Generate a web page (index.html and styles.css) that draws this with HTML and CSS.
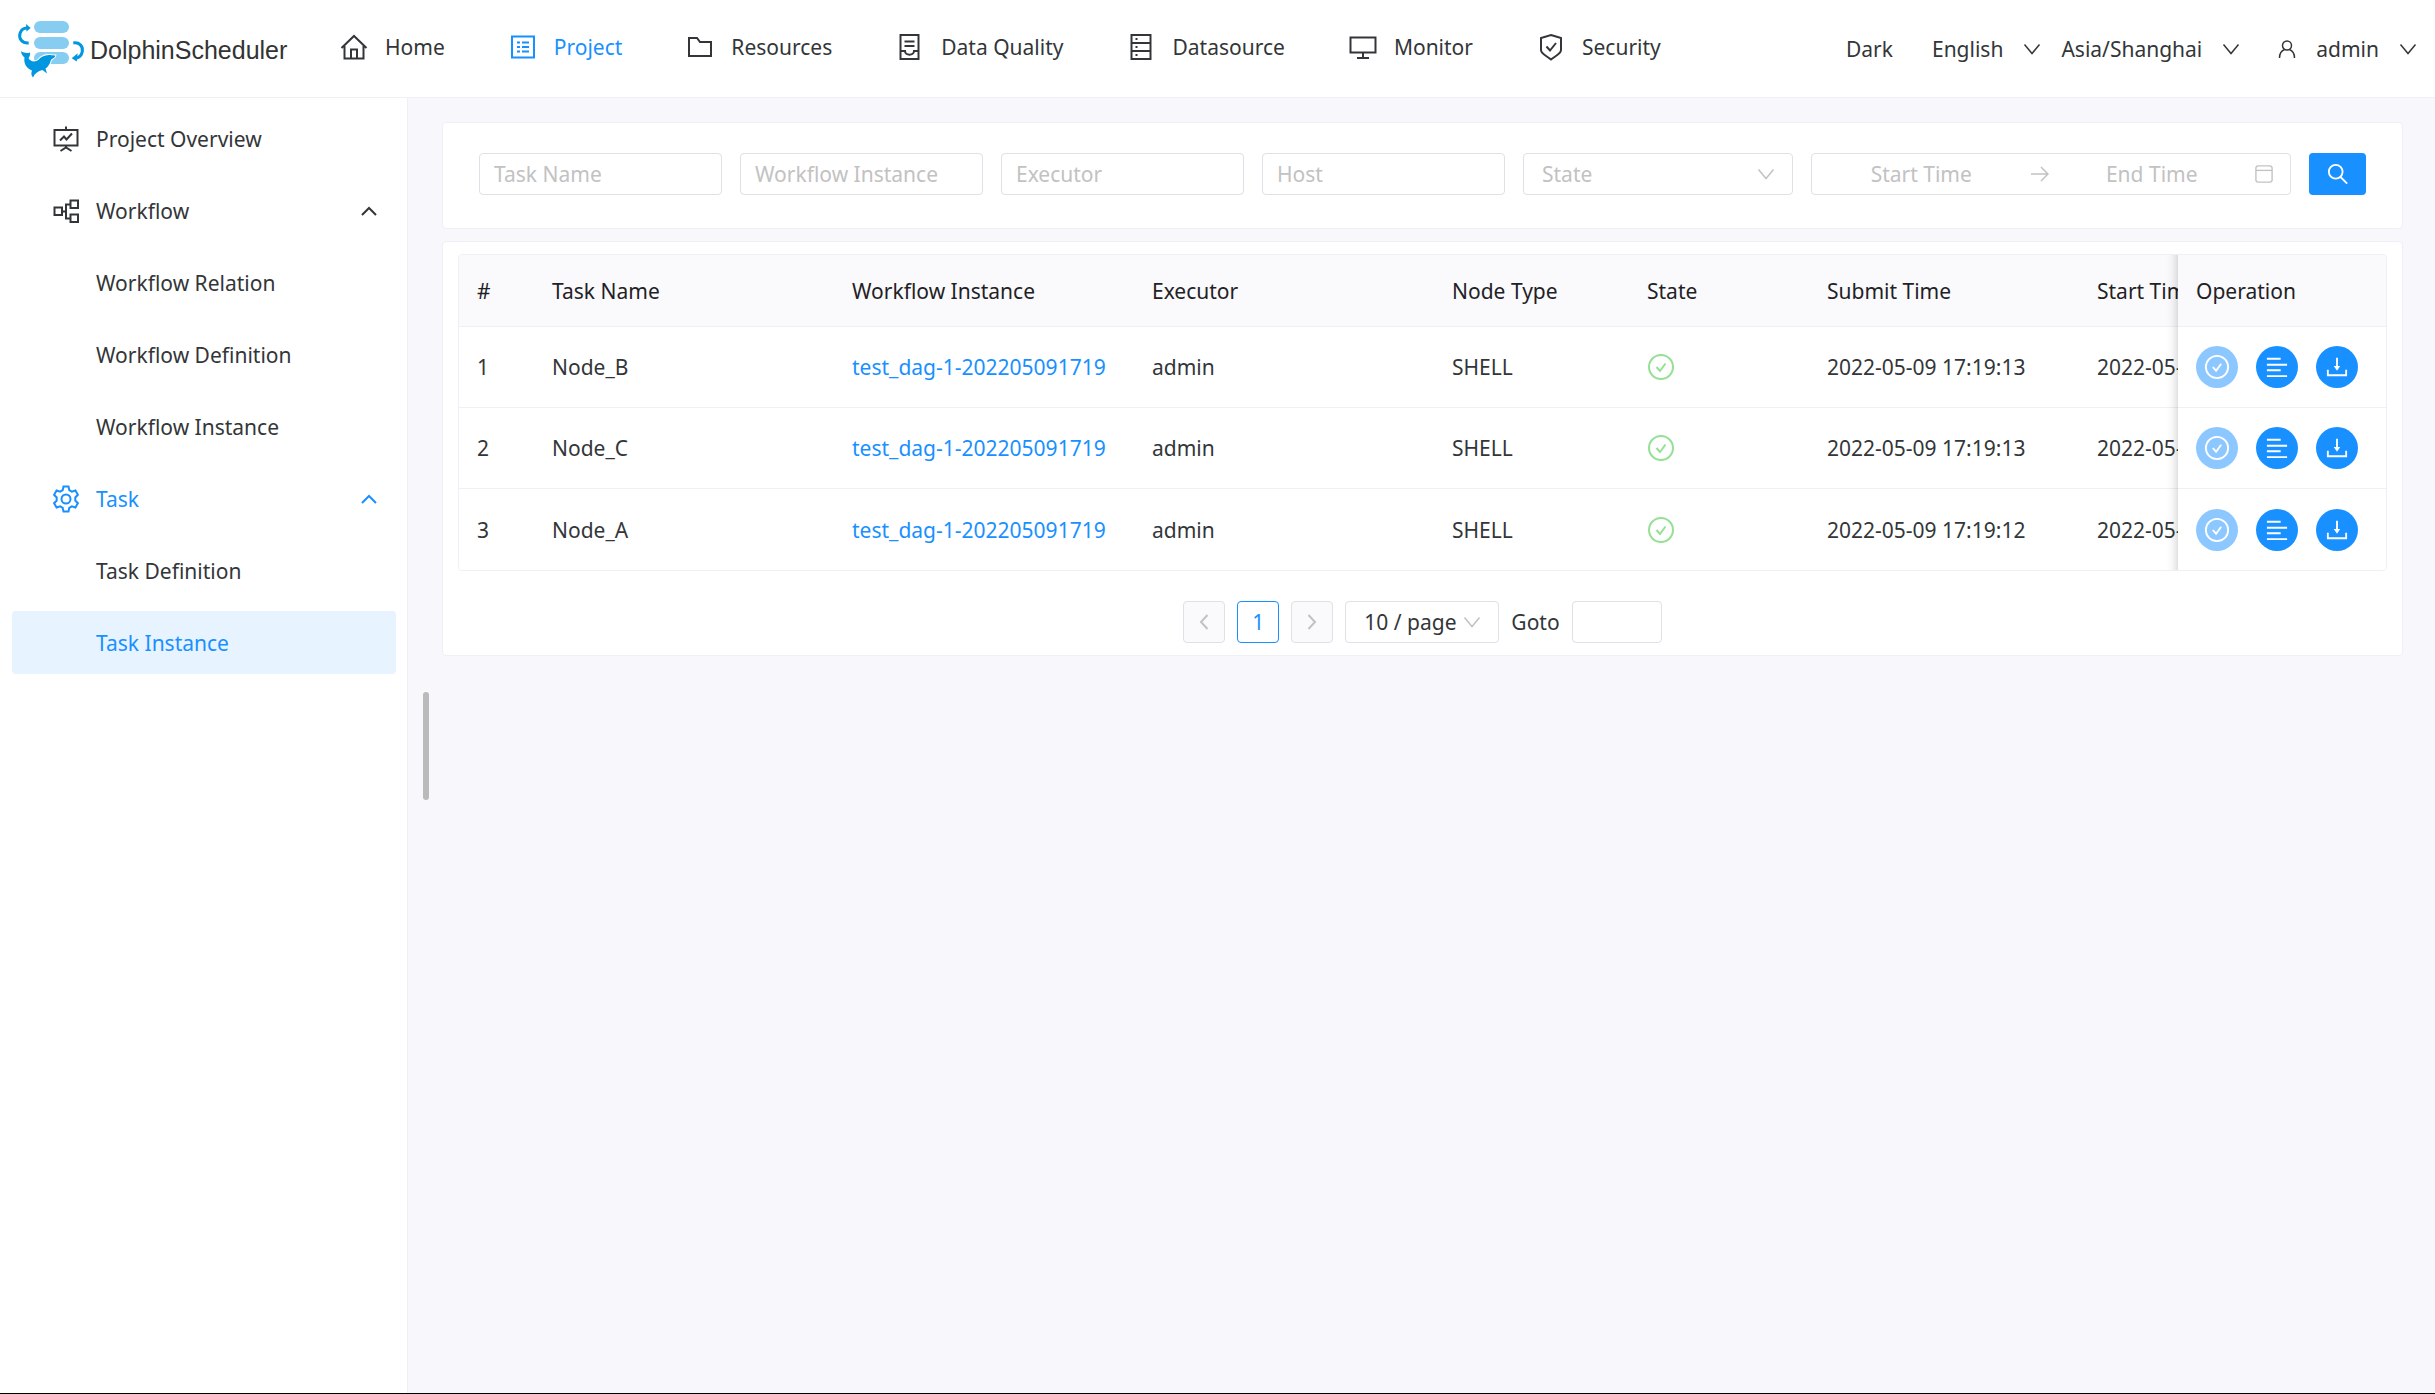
FILE: index.html
```html
<!DOCTYPE html>
<html lang="en">
<head>
<meta charset="utf-8">
<title>DolphinScheduler</title>
<link rel="stylesheet" href="styles.css">
</head>
<body>
<svg class="sprite" aria-hidden="true">
  <symbol id="i-home" viewBox="0 0 28 28"><path d="M1.500 15 14 3l12.500 12M4.500 13v12.500h19V13M11 25v-8.500h6V25"/></symbol>
  <symbol id="i-project" viewBox="0 0 28 28"><path d="M3 3.500h22v21H3zM8 9.500h3M8 14h3M8 18.500h3M13 9.500h7M13 14h7M13 18.500h7" /></symbol>
  <symbol id="i-folder" viewBox="0 0 28 28"><path d="M3 5h8l3 4h11v14H3z"/></symbol>
  <symbol id="i-quality" viewBox="0 0 28 28"><path d="M4.500 2h18v24h-18zM8.500 8.500h10M8.500 13h10M4.500 18h4.500c0 5 9 5 9 0h4.500"/></symbol>
  <symbol id="i-data" viewBox="0 0 28 28"><path d="M4.500 2h19v24h-19zM4.500 10h19M4.500 18h19M8.500 6h2M8.500 14h2M8.500 22h2"/></symbol>
  <symbol id="i-monitor" viewBox="0 0 28 28"><path d="M1.500 4.500h25v15h-25zM14 20v5M8 25h12"/></symbol>
  <symbol id="i-shield" viewBox="0 0 28 28"><path d="M14 2l10 3v12c0 4-6 6-10 9.500C10 23 4 21 4 17V5zM9.500 13.500l3.500 4 6-7.500"/></symbol>
  <symbol id="i-board" viewBox="0 0 28 28"><path d="M2.500 5h23v15.500h-23zM14 1.500V5M14 20.500V23M8.500 26l5.500-3.500 5.500 3.500M8 15.500l4-4 2.500 3 5.500-6"/></symbol>
  <symbol id="i-flow" viewBox="0 0 28 28"><path d="M2.500 10.500h7.500v7.500H2.500zM18.500 3.500H26V11h-7.500zM18.500 17.500H26V25h-7.500zM10 14.500h4M18.500 7.500H14v14h4.500"/></symbol>
  <symbol id="i-gear" viewBox="0 0 28 28"><path d="M11.500 1.500h5l.800 3.700 2.500 1.400 3.600-1.100 2.500 4.300-2.600 2.700v3l2.600 2.700-2.500 4.300-3.600-1.100-2.500 1.400-.800 3.700h-5l-.800-3.700-2.500-1.400-3.600 1.100-2.500-4.300 2.600-2.700v-3L2.100 9.800l2.500-4.300 3.600 1.100 2.500-1.400z"/><circle cx="14" cy="14" r="4.500"/></symbol>
  <symbol id="i-up" viewBox="0 0 18 18"><path d="M2 13l7-7 7 7"/></symbol>
  <symbol id="i-down" viewBox="0 0 18 18"><path d="M1.500 4.500 9 13.500l7.500-9"/></symbol>
  <symbol id="i-left" viewBox="0 0 18 18"><path d="M12.500 2 6 9l6.500 7"/></symbol>
  <symbol id="i-right" viewBox="0 0 18 18"><path d="M5.500 2 12 9l-6.500 7"/></symbol>
  <symbol id="i-user" viewBox="0 0 18 18"><circle cx="9" cy="5.500" r="4.500"/><path d="M1.500 18c0-5 2.500-7.500 5-8.500M16.500 18c0-5-2.500-7.500-5-8.500"/></symbol>
  <symbol id="i-arrow" viewBox="0 0 18 18"><path d="M0 9h17M10 2l7 7-7 7"/></symbol>
  <symbol id="i-calendar" viewBox="0 0 20 20"><rect x="1" y="1" width="18" height="18" rx="2.500"/><path d="M1 6h18"/></symbol>
  <symbol id="i-search" viewBox="0 0 24 24"><circle cx="9.500" cy="9.500" r="7.500"/><path d="M14.500 15l7.500 7.500"/></symbol>
  <symbol id="i-check" viewBox="0 0 28 28"><circle cx="14" cy="14" r="12"/><path d="M9.500 14l3.500 4 5.500-7.500"/></symbol>
  <symbol id="i-log" viewBox="0 0 24 24"><path d="M1 3h15M1 9.500h22M1 15.500h15M1 22h22"/></symbol>
  <symbol id="i-download" viewBox="0 0 24 24"><path d="M2 15v6h20v-6M12 2v11"/><path class="solid" d="M8.500 11h7L12 16z"/></symbol>
</svg>

<header class="header">
  <a class="logo" href="#" aria-label="DolphinScheduler">
    <svg class="logo-mark" viewBox="0 0 70 61" aria-hidden="true">
      <g class="pill"><rect x="18" y="3" width="35" height="12" rx="6"/><rect x="18" y="19" width="35" height="12" rx="6"/><rect x="18" y="34" width="35" height="12" rx="6"/></g>
      <path class="loop" d="M12.700 25C6 25.500 2.500 20.500 4 15.500 5 12 7.500 10 11 10M57.300 25c6-1 10 3 9 8.500-.700 4-3 6-6.500 6.800"/>
      <path class="dolphin" d="M10 6l4.700 4-4.200 3.500zM61.700 35.300l-6 5 5 3.200z"/>
      <path class="dolphin rim" d="M5 33.300C8 35 11 35.500 14 34.500 14.500 37 13.500 39 12.500 40 14 43.500 19 44.500 22.300 42 25 38.500 30 36 36 37.300L39.300 37.500C39 40.500 35.500 40 34.700 42.700 33.800 46 32 49 29.500 50.500L31 55.500 26.500 52C22 53 18.500 55.500 17 59.500 15 57 15 55.500 16 52.500 10 50 7.500 45 8.500 39.500 6.500 38 5.300 36 5 33.300z"/>
    </svg>
    <span class="logo-text">DolphinScheduler</span>
  </a>
  <nav class="nav" aria-label="Main">
    <a href="#"><svg class="icon"><use href="#i-home"/></svg>Home</a>
    <a href="#" class="active"><svg class="icon"><use href="#i-project"/></svg>Project</a>
    <a href="#"><svg class="icon"><use href="#i-folder"/></svg>Resources</a>
    <a href="#"><svg class="icon"><use href="#i-quality"/></svg>Data Quality</a>
    <a href="#"><svg class="icon"><use href="#i-data"/></svg>Datasource</a>
    <a href="#"><svg class="icon"><use href="#i-monitor"/></svg>Monitor</a>
    <a href="#"><svg class="icon"><use href="#i-shield"/></svg>Security</a>
  </nav>
  <div class="tools">
    <button type="button" class="theme">Dark</button>
    <button type="button">English<svg class="icon-s"><use href="#i-down"/></svg></button>
    <button type="button">Asia/Shanghai<svg class="icon-s"><use href="#i-down"/></svg></button>
    <button type="button" class="account"><svg class="icon-s"><use href="#i-user"/></svg>admin<svg class="icon-s"><use href="#i-down"/></svg></button>
  </div>
</header>

<div class="body">
  <aside class="sidebar">
    <nav class="menu" aria-label="Project">
      <a href="#"><svg class="icon"><use href="#i-board"/></svg>Project Overview</a>
      <button type="button" aria-expanded="true"><svg class="icon"><use href="#i-flow"/></svg>Workflow<svg class="icon-s fold"><use href="#i-up"/></svg></button>
      <a href="#" class="sub">Workflow Relation</a>
      <a href="#" class="sub">Workflow Definition</a>
      <a href="#" class="sub">Workflow Instance</a>
      <button type="button" aria-expanded="true" class="active"><svg class="icon"><use href="#i-gear"/></svg>Task<svg class="icon-s fold"><use href="#i-up"/></svg></button>
      <a href="#" class="sub">Task Definition</a>
      <a href="#" class="sub active selected">Task Instance</a>
    </nav>
    <button type="button" class="collapse" aria-label="Collapse menu"></button>
  </aside>

  <main class="content">
    <form class="card filters">
      <input class="box" type="text" placeholder="Task Name" aria-label="Task Name">
      <input class="box" type="text" placeholder="Workflow Instance" aria-label="Workflow Instance">
      <input class="box" type="text" placeholder="Executor" aria-label="Executor">
      <input class="box" type="text" placeholder="Host" aria-label="Host">
      <div class="box picker state"><select aria-label="State"><option>State</option></select><svg class="icon-s"><use href="#i-down"/></svg></div>
      <div class="box range">
        <input class="start" type="text" placeholder="Start Time" aria-label="Start Time">
        <svg class="icon-s"><use href="#i-arrow"/></svg>
        <input type="text" placeholder="End Time" aria-label="End Time">
        <svg class="icon-s"><use href="#i-calendar"/></svg>
      </div>
      <button type="button" class="search" aria-label="Search"><svg class="icon-m"><use href="#i-search"/></svg></button>
    </form>

    <section class="card list">
      <div class="table-wrap">
        <table>
          <colgroup><col class="c-num"><col class="c-wide"><col class="c-wide"><col class="c-wide"><col class="c-type"><col class="c-state"><col class="c-time"><col class="c-time"><col class="c-op"></colgroup>
          <thead>
            <tr><th>#</th><th>Task Name</th><th>Workflow Instance</th><th>Executor</th><th>Node Type</th><th>State</th><th>Submit Time</th><th>Start Time</th><th class="op">Operation</th></tr>
          </thead>
          <tbody>
            <tr><td>1</td><td>Node_B</td><td><a href="#">test_dag-1-202205091719</a></td><td>admin</td><td>SHELL</td><td><svg class="icon ok" role="img" aria-label="Success"><use href="#i-check"/></svg></td><td>2022-05-09 17:19:13</td><td>2022-05-09 17:19:13</td>
              <td class="op"><div class="actions"><button type="button" disabled aria-label="Force success"><svg class="icon"><use href="#i-check"/></svg></button><button type="button" aria-label="View log"><svg class="icon-m"><use href="#i-log"/></svg></button><button type="button" aria-label="Download log"><svg class="icon-m"><use href="#i-download"/></svg></button></div></td></tr>
            <tr><td>2</td><td>Node_C</td><td><a href="#">test_dag-1-202205091719</a></td><td>admin</td><td>SHELL</td><td><svg class="icon ok" role="img" aria-label="Success"><use href="#i-check"/></svg></td><td>2022-05-09 17:19:13</td><td>2022-05-09 17:19:13</td>
              <td class="op"><div class="actions"><button type="button" disabled aria-label="Force success"><svg class="icon"><use href="#i-check"/></svg></button><button type="button" aria-label="View log"><svg class="icon-m"><use href="#i-log"/></svg></button><button type="button" aria-label="Download log"><svg class="icon-m"><use href="#i-download"/></svg></button></div></td></tr>
            <tr><td>3</td><td>Node_A</td><td><a href="#">test_dag-1-202205091719</a></td><td>admin</td><td>SHELL</td><td><svg class="icon ok" role="img" aria-label="Success"><use href="#i-check"/></svg></td><td>2022-05-09 17:19:12</td><td>2022-05-09 17:19:12</td>
              <td class="op"><div class="actions"><button type="button" disabled aria-label="Force success"><svg class="icon"><use href="#i-check"/></svg></button><button type="button" aria-label="View log"><svg class="icon-m"><use href="#i-log"/></svg></button><button type="button" aria-label="Download log"><svg class="icon-m"><use href="#i-download"/></svg></button></div></td></tr>
          </tbody>
        </table>
      </div>
      <div class="pager">
        <button type="button" class="box page" disabled aria-label="Previous page"><svg class="icon-s"><use href="#i-left"/></svg></button>
        <button type="button" class="box page current">1</button>
        <button type="button" class="box page" disabled aria-label="Next page"><svg class="icon-s"><use href="#i-right"/></svg></button>
        <div class="box picker size"><select aria-label="Page size"><option>10 / page</option></select><svg class="icon-s"><use href="#i-down"/></svg></div>
        <label class="goto">Goto<input class="box" type="text"></label>
      </div>
    </section>
  </main>
</div>
</body>
</html>
```

FILE: styles.css
```css
* { box-sizing: border-box; }

body {
  margin: 0;
  min-height: 100vh;
  display: flex;
  flex-direction: column;
  border-bottom: 1px solid #000;
  background: #f7f7fc;
  color: #333639;
  font: 21px/30px "Noto Sans", "Open Sans", sans-serif;
}

a { color: inherit; text-decoration: none; }
button, input, select { font: inherit; color: inherit; margin: 0; }
button { border: 0; padding: 0; background: none; }

.sprite { display: none; }
.icon, .icon-s, .icon-m { flex: none; display: block; fill: none; stroke: currentColor; }
.icon { width: 28px; height: 28px; stroke-width: 2; }
.icon-m { width: 22px; height: 22px; stroke-width: 2; }
.icon-s { width: 18px; height: 18px; stroke-width: 2; }
.solid { fill: currentColor; stroke: none; }

/* Header */
.header {
  display: flex;
  align-items: center;
  height: 98px;
  flex: none;
  padding: 0 18px 0 16px;
  border-bottom: 1px solid #efeff5;
  background: #fff;
}
.logo { display: flex; align-items: center; width: 324px; gap: 4px; }
.logo-mark { width: 70px; height: 61px; flex: none; }
.logo-text { font: 25px/30px "Liberation Sans", Arial, sans-serif; color: #333; padding-top: 2px; }
.pill { fill: #86cdf1; }
.loop { fill: none; stroke: #0097e0; stroke-width: 3; }
.dolphin { fill: #0097e0; }
.rim { stroke: #fff; stroke-width: 2; paint-order: stroke; }
.nav { display: flex; gap: 64px; padding-bottom: 4px; }
.nav a { display: flex; align-items: center; gap: 17px; white-space: nowrap; }
.tools { display: flex; margin-left: auto; gap: 20px; }
.tools button { display: flex; align-items: center; gap: 20px; }
.theme { margin-right: 19px; }
.account { margin-left: 18px; }
.tools .icon-s { stroke-width: 1.500; }
.active { color: #1890ff; }

/* Layout */
.body { display: flex; flex: 1; }
.sidebar { position: relative; width: 408px; flex: none; border-right: 1px solid #efeff5; background: #fff; }
.menu { display: flex; flex-direction: column; gap: 9px; padding: 9px 11px 9px 12px; }
.menu a, .menu button {
  display: flex;
  align-items: center;
  gap: 16px;
  height: 63px;
  padding: 0 18px 0 40px;
  border-radius: 4px;
  text-align: left;
}
.menu .sub { padding-left: 84px; }
.menu .selected { background: #e7f3ff; }
.menu .fold { margin-left: auto; }
.collapse {
  position: absolute;
  left: 423px;
  top: 50%;
  width: 6px;
  height: 108px;
  transform: translateY(-50%);
  border-radius: 3px;
  background: #bababa;
}
.content { flex: 1; min-width: 0; display: flex; flex-direction: column; gap: 12px; padding: 24px 32px 24px 34px; }
.card { border: 1px solid #efeff5; border-radius: 4px; background: #fff; }

/* Filters */
.filters { display: flex; justify-content: flex-end; gap: 18px; padding: 30px 36px 33px; }
.box { height: 42px; border: 1px solid #e0e0e6; border-radius: 4px; background: #fff; outline: 0; }
.filters > input { width: 243px; padding: 0 44px 0 14px; }
::placeholder { color: #c2c2c2; opacity: 1; }
.picker { display: flex; align-items: center; position: relative; }
.picker select { flex: 1; height: 100%; min-width: 0; appearance: none; border: 0; background: none; outline: 0; padding: 0 18px; }
.picker svg { position: absolute; right: 17px; color: #c2c2c2; stroke-width: 1.500; pointer-events: none; }
.state { width: 270px; }
.state select { color: #c2c2c2; }
.range { display: flex; align-items: center; width: 480px; padding: 0 17px 0 0; color: #c2c2c2; }
.range input { flex: 1; min-width: 0; border: 0; padding: 0; text-align: center; outline: 0; background: none; }
.range .start { padding: 0 6px; }
.range .icon-s { stroke-width: 1.500; }
.search { display: grid; place-items: center; width: 57px; height: 42px; border-radius: 4px; background: #1890ff; color: #fff; }

/* Table */
.list { padding: 12px 15px; }
.table-wrap { overflow: hidden; border: 1px solid #efeff5; border-radius: 4px; }
table { width: 2098px; table-layout: fixed; border-spacing: 0; }
.c-num { width: 75px; }
.c-wide { width: 300px; }
.c-type { width: 195px; }
.c-state { width: 180px; }
.c-time { width: 270px; }
.c-op { width: 208px; }
th, td { height: 81px; padding: 0 18px; border-bottom: 1px solid #efeff5; background: #fff; text-align: left; white-space: nowrap; font-weight: 400; }
th { height: 72px; background: #fafafc; color: #1f2225; }
tbody tr:last-child td { border-bottom: 0; }
td a, .current { color: #1890ff; }
.ok { color: #95e095; }
.op { position: sticky; right: 0; }
.op::before {
  content: "";
  position: absolute;
  top: 0;
  bottom: -1px;
  left: -36px;
  width: 36px;
  box-shadow: inset -18px 0 12px -18px rgba(0, 0, 0, .24);
}
.actions { display: flex; gap: 18px; }
.actions button { display: grid; place-items: center; width: 42px; height: 42px; border-radius: 50%; background: #1890ff; color: #fff; }
.actions button:disabled { background: #8cc8ff; }
.actions .icon { width: 26px; height: 26px; }

/* Pagination */
.pager { display: flex; justify-content: center; gap: 12px; padding-top: 30px; }
.page { display: grid; place-items: center; width: 42px; }
.page:disabled { background: #fafafc; color: #c2c2c2; }
.page.current { border-color: #1890ff; color: #1890ff; }
.size { width: 154px; }
.goto { display: flex; align-items: center; gap: 12px; }
.goto input { width: 90px; padding: 0 12px; }
```
